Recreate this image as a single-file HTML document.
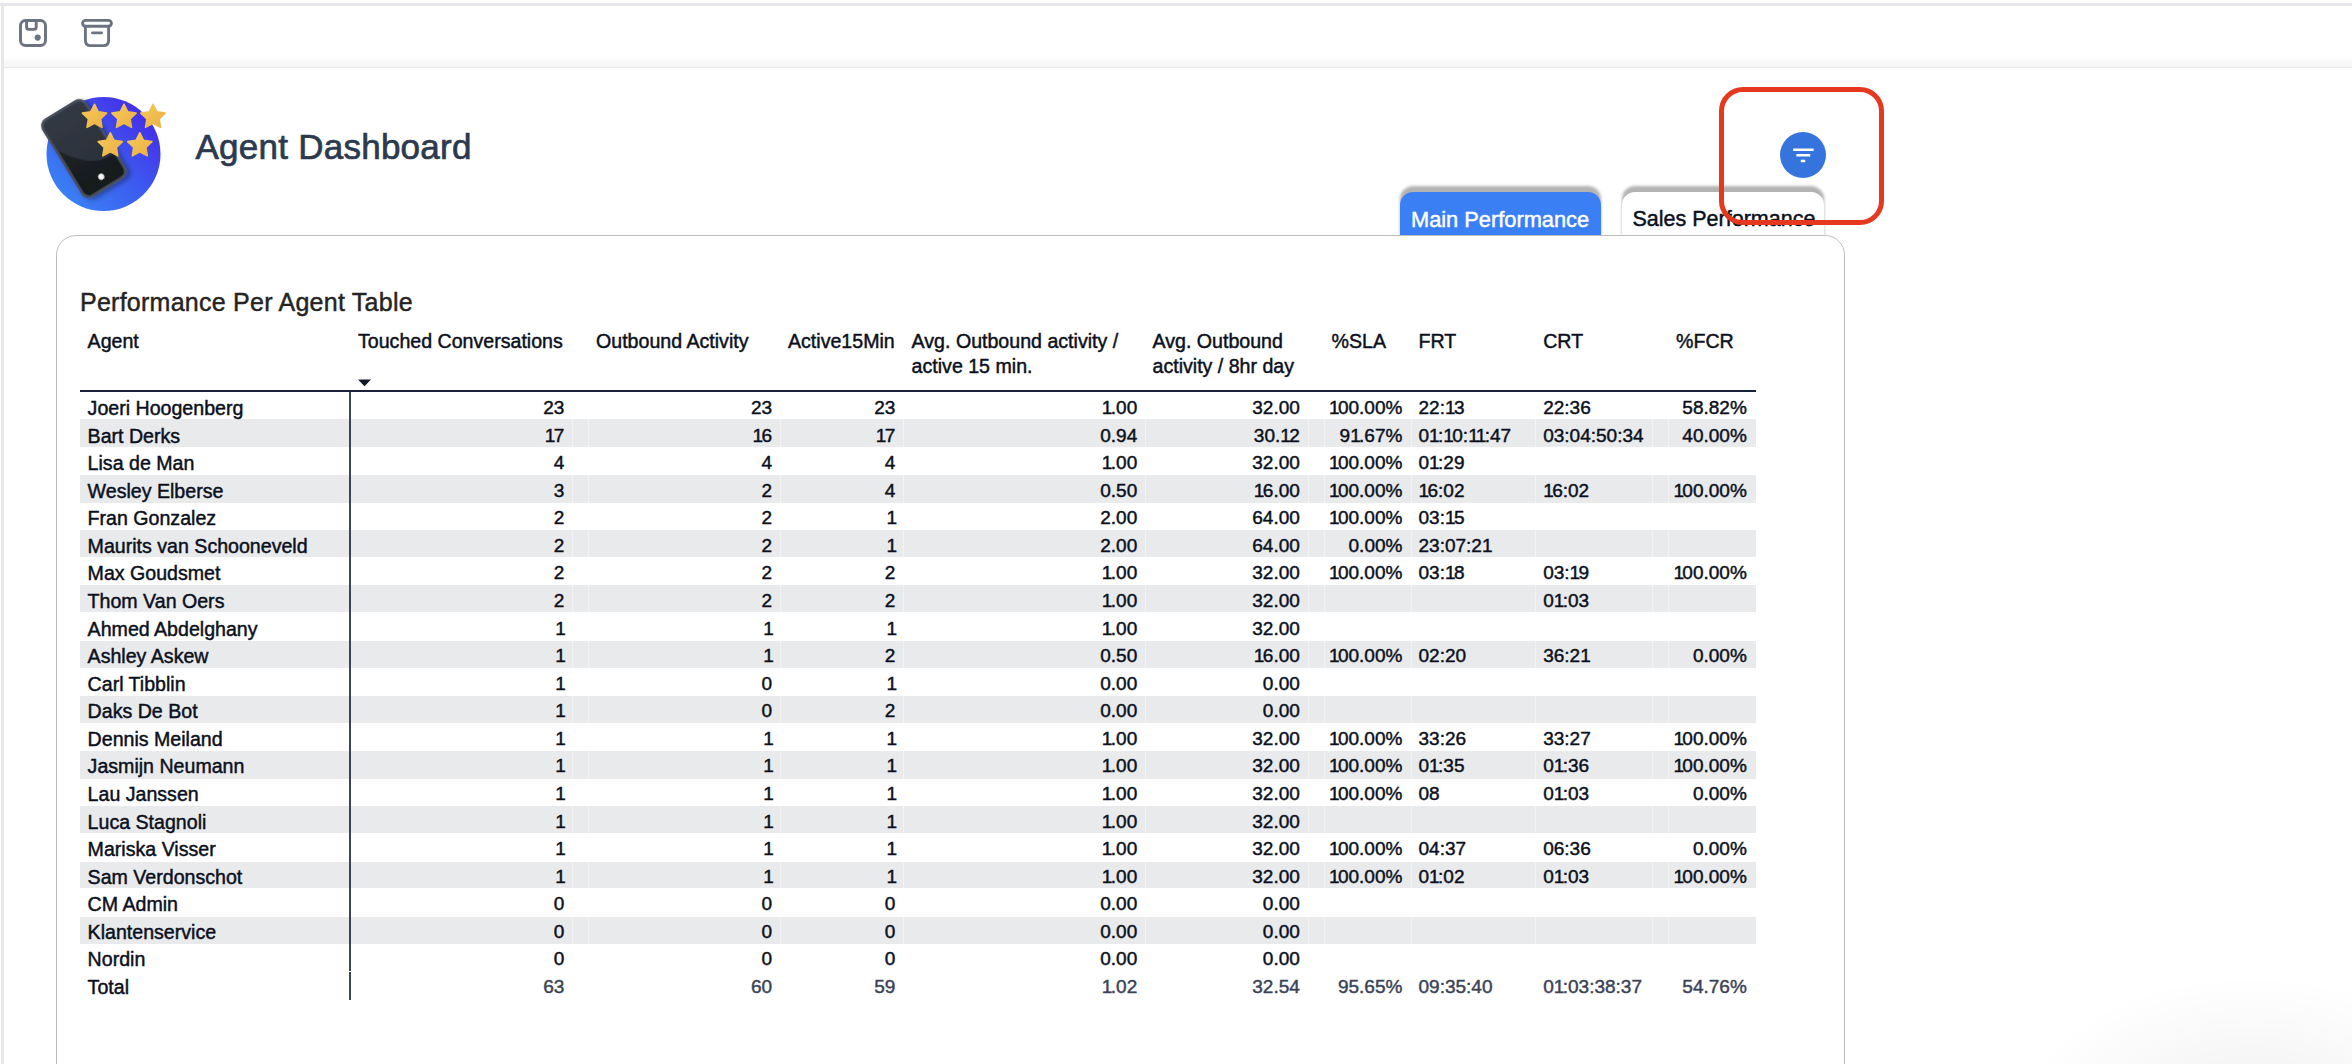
<!DOCTYPE html>
<html><head><meta charset="utf-8">
<style>
html,body{margin:0;padding:0;background:#fff;width:2352px;height:1064px;overflow:hidden;position:relative;font-family:"Liberation Sans",sans-serif;}
.abs{position:absolute;}
.t{position:absolute;white-space:nowrap;line-height:1;color:#0b1020;-webkit-text-stroke:0.45px currentColor;}
.hl{font-size:19.6px;}
.tl{font-size:19.6px;}
.tn{font-size:19.0px;}
.tn i{font-style:normal;letter-spacing:-1.6px;}
.r{text-align:right;}
.tot{color:#3a4356;}
.tot0{color:#0b1020;}
.st{position:absolute;left:80px;width:1676px;background:#e9eaec;}
</style></head><body>
<!-- top and left app chrome -->
<div class="abs" style="left:0;top:3px;width:2352px;height:2.5px;background:#e6e7eb"></div>
<div class="abs" style="left:1px;top:3px;width:2.6px;height:1061px;background:#e6e7eb"></div>
<div class="abs" style="left:4px;top:56px;width:2348px;height:11px;background:linear-gradient(to bottom,rgba(0,0,0,0),rgba(0,0,0,0.04));"></div>
<div class="abs" style="left:4px;top:67px;width:2348px;height:1px;background:#e9e9e9"></div>

<!-- toolbar icons -->
<svg class="abs" style="left:17px;top:17px" width="32" height="32" viewBox="0 0 32 32">
 <rect x="3.5" y="3.5" width="25" height="25" rx="5" fill="none" stroke="#6b7280" stroke-width="2.9"/>
 <path d="M9.6,3.5 V10 Q9.6,12.4 12,12.4 H16.8 Q19.2,12.4 19.2,10 V3.5" fill="none" stroke="#6b7280" stroke-width="2.9"/>
 <circle cx="20.7" cy="20.6" r="3.1" fill="#6b7280"/>
</svg>
<svg class="abs" style="left:79px;top:17px" width="36" height="32" viewBox="0 0 36 32">
 <rect x="3.6" y="3.4" width="28.8" height="5.8" rx="2.9" fill="none" stroke="#6b7280" stroke-width="2.9"/>
 <path d="M6.4,9.2 V23.5 Q6.4,28.6 11.5,28.6 H24.5 Q29.6,28.6 29.6,23.5 V9.2" fill="none" stroke="#6b7280" stroke-width="2.9"/>
 <path d="M13.5,15.9 H22.5" stroke="#6b7280" stroke-width="2.9" stroke-linecap="round"/>
</svg>

<!-- logo -->
<svg class="abs" style="left:30px;top:85px" width="150" height="135" viewBox="30 85 150 135">
 <defs>
  <linearGradient id="cg" x1="0" y1="1" x2="1" y2="0">
   <stop offset="0" stop-color="#3a8ef6"/>
   <stop offset="0.5" stop-color="#3b5cf0"/>
   <stop offset="1" stop-color="#4a1de4"/>
  </linearGradient>
  <linearGradient id="pg" x1="0" y1="0" x2="0" y2="1">
   <stop offset="0" stop-color="#22272d"/>
   <stop offset="1" stop-color="#161b1c"/>
  </linearGradient>
  <linearGradient id="sg" x1="0" y1="0" x2="1" y2="1">
   <stop offset="0" stop-color="#f7c95a"/>
   <stop offset="1" stop-color="#eab044"/>
  </linearGradient>
  <linearGradient id="pg2" x1="0" y1="0" x2="0" y2="1">
   <stop offset="0" stop-color="#323944"/>
   <stop offset="1" stop-color="#2b313a"/>
  </linearGradient>
  <filter id="ps" x="-30%" y="-30%" width="160%" height="160%"><feDropShadow dx="2" dy="3" stdDeviation="2.5" flood-color="#000" flood-opacity="0.35"/></filter>
 </defs>
 <circle cx="103.5" cy="154" r="57" fill="url(#cg)"/>
 <g transform="translate(84,148.6) rotate(-31.5)" filter="url(#ps)">
  <rect x="-26" y="-46" width="52" height="92" rx="8.5" fill="#4a505e"/>
  <rect x="-23.3" y="-43.3" width="46.6" height="86.6" rx="6.5" fill="url(#pg)"/>
  <path d="M-23.3,-12 Q-2,24 23.3,19 V-36.8 Q23.3,-43.3 16.8,-43.3 H-16.8 Q-23.3,-43.3 -23.3,-36.8 Z" fill="url(#pg2)"/>
  <circle cx="0" cy="33" r="2.9" fill="#f4f4f4"/>
 </g>
 <path transform="translate(94.5,117) scale(1.27)" d="M0,-10 L2.94,-4.05 L9.51,-3.09 L4.76,1.55 L5.88,8.09 L0,5 L-5.88,8.09 L-4.76,1.55 L-9.51,-3.09 L-2.94,-4.05 Z" fill="url(#sg)" stroke="url(#sg)" stroke-width="1.3" stroke-linejoin="round"/>
 <path transform="translate(124,117) scale(1.27)" d="M0,-10 L2.94,-4.05 L9.51,-3.09 L4.76,1.55 L5.88,8.09 L0,5 L-5.88,8.09 L-4.76,1.55 L-9.51,-3.09 L-2.94,-4.05 Z" fill="url(#sg)" stroke="url(#sg)" stroke-width="1.3" stroke-linejoin="round"/>
 <path transform="translate(153,117) scale(1.27)" d="M0,-10 L2.94,-4.05 L9.51,-3.09 L4.76,1.55 L5.88,8.09 L0,5 L-5.88,8.09 L-4.76,1.55 L-9.51,-3.09 L-2.94,-4.05 Z" fill="url(#sg)" stroke="url(#sg)" stroke-width="1.3" stroke-linejoin="round"/>
 <path transform="translate(110.3,145.5) scale(1.27)" d="M0,-10 L2.94,-4.05 L9.51,-3.09 L4.76,1.55 L5.88,8.09 L0,5 L-5.88,8.09 L-4.76,1.55 L-9.51,-3.09 L-2.94,-4.05 Z" fill="url(#sg)" stroke="url(#sg)" stroke-width="1.3" stroke-linejoin="round"/>
 <path transform="translate(139.8,145.5) scale(1.27)" d="M0,-10 L2.94,-4.05 L9.51,-3.09 L4.76,1.55 L5.88,8.09 L0,5 L-5.88,8.09 L-4.76,1.55 L-9.51,-3.09 L-2.94,-4.05 Z" fill="url(#sg)" stroke="url(#sg)" stroke-width="1.3" stroke-linejoin="round"/>
</svg>

<div class="t" style="left:195.5px;top:128.97px;font-size:35px;color:#2c3a50;-webkit-text-stroke:0.7px #2c3a50;letter-spacing:0.25px">Agent Dashboard</div>

<!-- tabs -->
<div class="abs" style="left:1400px;top:192px;width:201px;height:50px;border-radius:13px 13px 0 0;background:#3b7ff5;box-shadow:0 -6px 3px 0 #b3b3b3"></div>
<div class="t" style="left:1411px;top:208.55px;font-size:21.8px;color:#fff">Main Performance</div>
<div class="abs" style="left:1622px;top:192px;width:202px;height:50px;border-radius:13px 13px 0 0;background:#fff;box-shadow:0 -6px 3px 0 #b3b3b3"></div>
<div class="t" style="left:1632.5px;top:208.80px;font-size:21.5px;color:#0b1020">Sales Performance</div>

<!-- card -->
<div class="abs" style="left:56px;top:235px;width:1787px;height:900px;border:1.5px solid #bdbdbd;border-radius:20px;background:#fff"></div>
<div class="t" style="left:80px;top:290.24px;font-size:25px;color:#252423;letter-spacing:0.25px">Performance Per Agent Table</div>

<!-- header line + vertical line -->
<div class="abs" style="left:80px;top:390.3px;width:1676px;height:1.7px;background:#18213a"></div>
<div class="t hl" style="left:87.6px;top:332.31px">Agent</div>
<div class="t hl" style="left:358px;top:332.31px">Touched Conversations</div>
<div class="t hl" style="left:596px;top:332.31px">Outbound Activity</div>
<div class="t hl" style="left:788px;top:332.31px">Active15Min</div>
<div class="t hl" style="left:911.6px;top:332.31px">Avg. Outbound activity /</div>
<div class="t hl" style="left:911.6px;top:357.31px">active 15 min.</div>
<div class="t hl" style="left:1152.5px;top:332.31px">Avg. Outbound</div>
<div class="t hl" style="left:1152.5px;top:357.31px">activity / 8hr day</div>
<div class="t hl" style="left:1331.6px;top:332.31px">%SLA</div>
<div class="t hl" style="left:1418.5px;top:332.31px">FRT</div>
<div class="t hl" style="left:1543.2px;top:332.31px">CRT</div>
<div class="t hl" style="left:1676px;top:332.31px">%FCR</div>
<div class="st" style="top:419.3px;height:27.4px"></div>
<div class="st" style="top:474.8px;height:27.8px"></div>
<div class="st" style="top:530.1px;height:27.2px"></div>
<div class="st" style="top:585.1px;height:27.4px"></div>
<div class="st" style="top:640.8px;height:27.3px"></div>
<div class="st" style="top:695.6px;height:27.2px"></div>
<div class="st" style="top:750.6px;height:28.2px"></div>
<div class="st" style="top:806.3px;height:26.6px"></div>
<div class="st" style="top:861.6px;height:26.7px"></div>
<div class="st" style="top:916.9px;height:27.1px"></div>
<div class="t tl " style="left:87.6px;top:399.01px">Joeri Hoogenberg</div>
<div class="t tn r " style="right:1787.7px;top:398.02px">23</div>
<div class="t tn r " style="right:1579.9px;top:398.02px">23</div>
<div class="t tn r " style="right:1456.6px;top:398.02px">23</div>
<div class="t tn r " style="right:1214.8px;top:398.02px"><i>1</i>.00</div>
<div class="t tn r " style="right:1052.2px;top:398.02px">32.00</div>
<div class="t tn r " style="right:949.6px;top:398.02px"><i>1</i>00.00%</div>
<div class="t tn " style="left:1418.5px;top:398.02px">22:<i>1</i>3</div>
<div class="t tn " style="left:1543.2px;top:398.02px">22:36</div>
<div class="t tn r " style="right:605.2px;top:398.02px">58.82%</div>
<div class="t tl " style="left:87.6px;top:426.58px">Bart Derks</div>
<div class="t tn r " style="right:1787.7px;top:425.59px"><i>1</i>7</div>
<div class="t tn r " style="right:1579.9px;top:425.59px"><i>1</i>6</div>
<div class="t tn r " style="right:1456.6px;top:425.59px"><i>1</i>7</div>
<div class="t tn r " style="right:1214.8px;top:425.59px">0.94</div>
<div class="t tn r " style="right:1052.2px;top:425.59px">30.<i>1</i>2</div>
<div class="t tn r " style="right:949.6px;top:425.59px">9<i>1</i>.67%</div>
<div class="t tn " style="left:1418.5px;top:425.59px">0<i>1</i>:<i>1</i>0:<i>1</i><i>1</i>:47</div>
<div class="t tn " style="left:1543.2px;top:425.59px">03:04:50:34</div>
<div class="t tn r " style="right:605.2px;top:425.59px">40.00%</div>
<div class="t tl " style="left:87.6px;top:454.15px">Lisa de Man</div>
<div class="t tn r " style="right:1787.7px;top:453.16px">4</div>
<div class="t tn r " style="right:1579.9px;top:453.16px">4</div>
<div class="t tn r " style="right:1456.6px;top:453.16px">4</div>
<div class="t tn r " style="right:1214.8px;top:453.16px"><i>1</i>.00</div>
<div class="t tn r " style="right:1052.2px;top:453.16px">32.00</div>
<div class="t tn r " style="right:949.6px;top:453.16px"><i>1</i>00.00%</div>
<div class="t tn " style="left:1418.5px;top:453.16px">0<i>1</i>:29</div>
<div class="t tl " style="left:87.6px;top:481.72px">Wesley Elberse</div>
<div class="t tn r " style="right:1787.7px;top:480.73px">3</div>
<div class="t tn r " style="right:1579.9px;top:480.73px">2</div>
<div class="t tn r " style="right:1456.6px;top:480.73px">4</div>
<div class="t tn r " style="right:1214.8px;top:480.73px">0.50</div>
<div class="t tn r " style="right:1052.2px;top:480.73px"><i>1</i>6.00</div>
<div class="t tn r " style="right:949.6px;top:480.73px"><i>1</i>00.00%</div>
<div class="t tn " style="left:1418.5px;top:480.73px"><i>1</i>6:02</div>
<div class="t tn " style="left:1543.2px;top:480.73px"><i>1</i>6:02</div>
<div class="t tn r " style="right:605.2px;top:480.73px"><i>1</i>00.00%</div>
<div class="t tl " style="left:87.6px;top:509.29px">Fran Gonzalez</div>
<div class="t tn r " style="right:1787.7px;top:508.30px">2</div>
<div class="t tn r " style="right:1579.9px;top:508.30px">2</div>
<div class="t tn r " style="right:1456.6px;top:508.30px"><i>1</i></div>
<div class="t tn r " style="right:1214.8px;top:508.30px">2.00</div>
<div class="t tn r " style="right:1052.2px;top:508.30px">64.00</div>
<div class="t tn r " style="right:949.6px;top:508.30px"><i>1</i>00.00%</div>
<div class="t tn " style="left:1418.5px;top:508.30px">03:<i>1</i>5</div>
<div class="t tl " style="left:87.6px;top:536.86px">Maurits van Schooneveld</div>
<div class="t tn r " style="right:1787.7px;top:535.87px">2</div>
<div class="t tn r " style="right:1579.9px;top:535.87px">2</div>
<div class="t tn r " style="right:1456.6px;top:535.87px"><i>1</i></div>
<div class="t tn r " style="right:1214.8px;top:535.87px">2.00</div>
<div class="t tn r " style="right:1052.2px;top:535.87px">64.00</div>
<div class="t tn r " style="right:949.6px;top:535.87px">0.00%</div>
<div class="t tn " style="left:1418.5px;top:535.87px">23:07:2<i>1</i></div>
<div class="t tl " style="left:87.6px;top:564.43px">Max Goudsmet</div>
<div class="t tn r " style="right:1787.7px;top:563.44px">2</div>
<div class="t tn r " style="right:1579.9px;top:563.44px">2</div>
<div class="t tn r " style="right:1456.6px;top:563.44px">2</div>
<div class="t tn r " style="right:1214.8px;top:563.44px"><i>1</i>.00</div>
<div class="t tn r " style="right:1052.2px;top:563.44px">32.00</div>
<div class="t tn r " style="right:949.6px;top:563.44px"><i>1</i>00.00%</div>
<div class="t tn " style="left:1418.5px;top:563.44px">03:<i>1</i>8</div>
<div class="t tn " style="left:1543.2px;top:563.44px">03:<i>1</i>9</div>
<div class="t tn r " style="right:605.2px;top:563.44px"><i>1</i>00.00%</div>
<div class="t tl " style="left:87.6px;top:592.00px">Thom Van Oers</div>
<div class="t tn r " style="right:1787.7px;top:591.01px">2</div>
<div class="t tn r " style="right:1579.9px;top:591.01px">2</div>
<div class="t tn r " style="right:1456.6px;top:591.01px">2</div>
<div class="t tn r " style="right:1214.8px;top:591.01px"><i>1</i>.00</div>
<div class="t tn r " style="right:1052.2px;top:591.01px">32.00</div>
<div class="t tn " style="left:1543.2px;top:591.01px">0<i>1</i>:03</div>
<div class="t tl " style="left:87.6px;top:619.57px">Ahmed Abdelghany</div>
<div class="t tn r " style="right:1787.7px;top:618.58px"><i>1</i></div>
<div class="t tn r " style="right:1579.9px;top:618.58px"><i>1</i></div>
<div class="t tn r " style="right:1456.6px;top:618.58px"><i>1</i></div>
<div class="t tn r " style="right:1214.8px;top:618.58px"><i>1</i>.00</div>
<div class="t tn r " style="right:1052.2px;top:618.58px">32.00</div>
<div class="t tl " style="left:87.6px;top:647.14px">Ashley Askew</div>
<div class="t tn r " style="right:1787.7px;top:646.15px"><i>1</i></div>
<div class="t tn r " style="right:1579.9px;top:646.15px"><i>1</i></div>
<div class="t tn r " style="right:1456.6px;top:646.15px">2</div>
<div class="t tn r " style="right:1214.8px;top:646.15px">0.50</div>
<div class="t tn r " style="right:1052.2px;top:646.15px"><i>1</i>6.00</div>
<div class="t tn r " style="right:949.6px;top:646.15px"><i>1</i>00.00%</div>
<div class="t tn " style="left:1418.5px;top:646.15px">02:20</div>
<div class="t tn " style="left:1543.2px;top:646.15px">36:2<i>1</i></div>
<div class="t tn r " style="right:605.2px;top:646.15px">0.00%</div>
<div class="t tl " style="left:87.6px;top:674.71px">Carl Tibblin</div>
<div class="t tn r " style="right:1787.7px;top:673.72px"><i>1</i></div>
<div class="t tn r " style="right:1579.9px;top:673.72px">0</div>
<div class="t tn r " style="right:1456.6px;top:673.72px"><i>1</i></div>
<div class="t tn r " style="right:1214.8px;top:673.72px">0.00</div>
<div class="t tn r " style="right:1052.2px;top:673.72px">0.00</div>
<div class="t tl " style="left:87.6px;top:702.28px">Daks De Bot</div>
<div class="t tn r " style="right:1787.7px;top:701.29px"><i>1</i></div>
<div class="t tn r " style="right:1579.9px;top:701.29px">0</div>
<div class="t tn r " style="right:1456.6px;top:701.29px">2</div>
<div class="t tn r " style="right:1214.8px;top:701.29px">0.00</div>
<div class="t tn r " style="right:1052.2px;top:701.29px">0.00</div>
<div class="t tl " style="left:87.6px;top:729.85px">Dennis Meiland</div>
<div class="t tn r " style="right:1787.7px;top:728.86px"><i>1</i></div>
<div class="t tn r " style="right:1579.9px;top:728.86px"><i>1</i></div>
<div class="t tn r " style="right:1456.6px;top:728.86px"><i>1</i></div>
<div class="t tn r " style="right:1214.8px;top:728.86px"><i>1</i>.00</div>
<div class="t tn r " style="right:1052.2px;top:728.86px">32.00</div>
<div class="t tn r " style="right:949.6px;top:728.86px"><i>1</i>00.00%</div>
<div class="t tn " style="left:1418.5px;top:728.86px">33:26</div>
<div class="t tn " style="left:1543.2px;top:728.86px">33:27</div>
<div class="t tn r " style="right:605.2px;top:728.86px"><i>1</i>00.00%</div>
<div class="t tl " style="left:87.6px;top:757.42px">Jasmijn Neumann</div>
<div class="t tn r " style="right:1787.7px;top:756.43px"><i>1</i></div>
<div class="t tn r " style="right:1579.9px;top:756.43px"><i>1</i></div>
<div class="t tn r " style="right:1456.6px;top:756.43px"><i>1</i></div>
<div class="t tn r " style="right:1214.8px;top:756.43px"><i>1</i>.00</div>
<div class="t tn r " style="right:1052.2px;top:756.43px">32.00</div>
<div class="t tn r " style="right:949.6px;top:756.43px"><i>1</i>00.00%</div>
<div class="t tn " style="left:1418.5px;top:756.43px">0<i>1</i>:35</div>
<div class="t tn " style="left:1543.2px;top:756.43px">0<i>1</i>:36</div>
<div class="t tn r " style="right:605.2px;top:756.43px"><i>1</i>00.00%</div>
<div class="t tl " style="left:87.6px;top:784.99px">Lau Janssen</div>
<div class="t tn r " style="right:1787.7px;top:784.00px"><i>1</i></div>
<div class="t tn r " style="right:1579.9px;top:784.00px"><i>1</i></div>
<div class="t tn r " style="right:1456.6px;top:784.00px"><i>1</i></div>
<div class="t tn r " style="right:1214.8px;top:784.00px"><i>1</i>.00</div>
<div class="t tn r " style="right:1052.2px;top:784.00px">32.00</div>
<div class="t tn r " style="right:949.6px;top:784.00px"><i>1</i>00.00%</div>
<div class="t tn " style="left:1418.5px;top:784.00px">08</div>
<div class="t tn " style="left:1543.2px;top:784.00px">0<i>1</i>:03</div>
<div class="t tn r " style="right:605.2px;top:784.00px">0.00%</div>
<div class="t tl " style="left:87.6px;top:812.56px">Luca Stagnoli</div>
<div class="t tn r " style="right:1787.7px;top:811.57px"><i>1</i></div>
<div class="t tn r " style="right:1579.9px;top:811.57px"><i>1</i></div>
<div class="t tn r " style="right:1456.6px;top:811.57px"><i>1</i></div>
<div class="t tn r " style="right:1214.8px;top:811.57px"><i>1</i>.00</div>
<div class="t tn r " style="right:1052.2px;top:811.57px">32.00</div>
<div class="t tl " style="left:87.6px;top:840.13px">Mariska Visser</div>
<div class="t tn r " style="right:1787.7px;top:839.14px"><i>1</i></div>
<div class="t tn r " style="right:1579.9px;top:839.14px"><i>1</i></div>
<div class="t tn r " style="right:1456.6px;top:839.14px"><i>1</i></div>
<div class="t tn r " style="right:1214.8px;top:839.14px"><i>1</i>.00</div>
<div class="t tn r " style="right:1052.2px;top:839.14px">32.00</div>
<div class="t tn r " style="right:949.6px;top:839.14px"><i>1</i>00.00%</div>
<div class="t tn " style="left:1418.5px;top:839.14px">04:37</div>
<div class="t tn " style="left:1543.2px;top:839.14px">06:36</div>
<div class="t tn r " style="right:605.2px;top:839.14px">0.00%</div>
<div class="t tl " style="left:87.6px;top:867.70px">Sam Verdonschot</div>
<div class="t tn r " style="right:1787.7px;top:866.71px"><i>1</i></div>
<div class="t tn r " style="right:1579.9px;top:866.71px"><i>1</i></div>
<div class="t tn r " style="right:1456.6px;top:866.71px"><i>1</i></div>
<div class="t tn r " style="right:1214.8px;top:866.71px"><i>1</i>.00</div>
<div class="t tn r " style="right:1052.2px;top:866.71px">32.00</div>
<div class="t tn r " style="right:949.6px;top:866.71px"><i>1</i>00.00%</div>
<div class="t tn " style="left:1418.5px;top:866.71px">0<i>1</i>:02</div>
<div class="t tn " style="left:1543.2px;top:866.71px">0<i>1</i>:03</div>
<div class="t tn r " style="right:605.2px;top:866.71px"><i>1</i>00.00%</div>
<div class="t tl " style="left:87.6px;top:895.27px">CM Admin</div>
<div class="t tn r " style="right:1787.7px;top:894.28px">0</div>
<div class="t tn r " style="right:1579.9px;top:894.28px">0</div>
<div class="t tn r " style="right:1456.6px;top:894.28px">0</div>
<div class="t tn r " style="right:1214.8px;top:894.28px">0.00</div>
<div class="t tn r " style="right:1052.2px;top:894.28px">0.00</div>
<div class="t tl " style="left:87.6px;top:922.84px">Klantenservice</div>
<div class="t tn r " style="right:1787.7px;top:921.85px">0</div>
<div class="t tn r " style="right:1579.9px;top:921.85px">0</div>
<div class="t tn r " style="right:1456.6px;top:921.85px">0</div>
<div class="t tn r " style="right:1214.8px;top:921.85px">0.00</div>
<div class="t tn r " style="right:1052.2px;top:921.85px">0.00</div>
<div class="t tl " style="left:87.6px;top:950.41px">Nordin</div>
<div class="t tn r " style="right:1787.7px;top:949.42px">0</div>
<div class="t tn r " style="right:1579.9px;top:949.42px">0</div>
<div class="t tn r " style="right:1456.6px;top:949.42px">0</div>
<div class="t tn r " style="right:1214.8px;top:949.42px">0.00</div>
<div class="t tn r " style="right:1052.2px;top:949.42px">0.00</div>
<div class="t tl tot0" style="left:87.6px;top:977.98px">Total</div>
<div class="t tn r tot" style="right:1787.7px;top:976.99px">63</div>
<div class="t tn r tot" style="right:1579.9px;top:976.99px">60</div>
<div class="t tn r tot" style="right:1456.6px;top:976.99px">59</div>
<div class="t tn r tot" style="right:1214.8px;top:976.99px"><i>1</i>.02</div>
<div class="t tn r tot" style="right:1052.2px;top:976.99px">32.54</div>
<div class="t tn r tot" style="right:949.6px;top:976.99px">95.65%</div>
<div class="t tn tot" style="left:1418.5px;top:976.99px">09:35:40</div>
<div class="t tn tot" style="left:1543.2px;top:976.99px">0<i>1</i>:03:38:37</div>
<div class="t tn r tot" style="right:605.2px;top:976.99px">54.76%</div>
<div class="abs" style="left:572.0px;top:392px;width:1px;height:580px;background:rgba(255,255,255,0.45)"></div>
<div class="abs" style="left:587.9px;top:392px;width:1px;height:580px;background:rgba(255,255,255,0.45)"></div>
<div class="abs" style="left:779.9px;top:392px;width:1px;height:580px;background:rgba(255,255,255,0.45)"></div>
<div class="abs" style="left:902.9px;top:392px;width:1px;height:580px;background:rgba(255,255,255,0.45)"></div>
<div class="abs" style="left:1144.8px;top:392px;width:1px;height:580px;background:rgba(255,255,255,0.45)"></div>
<div class="abs" style="left:1307.5px;top:392px;width:1px;height:580px;background:rgba(255,255,255,0.45)"></div>
<div class="abs" style="left:1324.0px;top:392px;width:1px;height:580px;background:rgba(255,255,255,0.45)"></div>
<div class="abs" style="left:1410.8px;top:392px;width:1px;height:580px;background:rgba(255,255,255,0.45)"></div>
<div class="abs" style="left:1534.6px;top:392px;width:1px;height:580px;background:rgba(255,255,255,0.45)"></div>
<div class="abs" style="left:1651.9px;top:392px;width:1px;height:580px;background:rgba(255,255,255,0.45)"></div>
<div class="abs" style="left:1668.0px;top:392px;width:1px;height:580px;background:rgba(255,255,255,0.45)"></div>
<div class="abs" style="left:349px;top:392px;width:2px;height:579px;background:#3c4456"></div>
<div class="abs" style="left:349px;top:972px;width:2px;height:28px;background:#3c4456"></div>
<svg class="abs" style="left:357px;top:377.7px" width="15" height="10" viewBox="0 0 15 10"><path d="M1,1.4 H14 L7.5,8.3 Z" fill="#111827"/></svg>

<!-- filter button -->
<div class="abs" style="left:1780px;top:132px;width:46px;height:46px;border-radius:50%;background:#3574dc"></div>
<svg class="abs" style="left:1780px;top:132px" width="46" height="46" viewBox="0 0 46 46">
 <path d="M13.2,17.8 H33.6 M16.4,23.3 H30.2 M20.8,29 H25.2" stroke="#fff" stroke-width="2.4"/>
</svg>

<div class="abs" style="left:1952px;top:900px;width:400px;height:164px;background:radial-gradient(ellipse 230px 140px at 300px 215px,rgba(0,0,0,0.06),rgba(0,0,0,0) 100%)"></div>
<!-- red highlight -->
<div class="abs" style="left:1719px;top:87px;width:155px;height:128px;border:5px solid #e4391e;border-radius:24px"></div>
</body></html>
